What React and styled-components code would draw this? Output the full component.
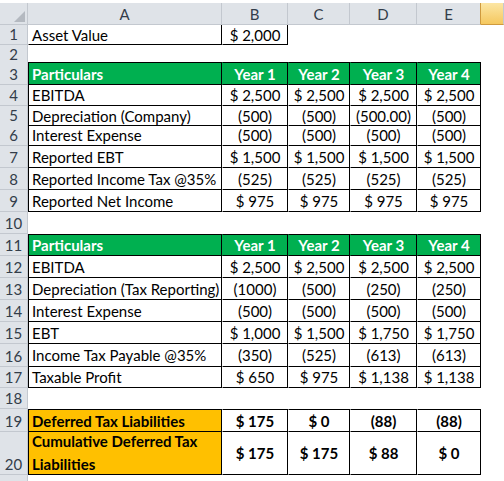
import React from "react";
import styled, { createGlobalStyle } from "styled-components";

const GREEN = "#00b050";
const GOLD = "#ffc000";
const GRID = "#c3c8cf";
const HEAD_BG = "#dfe3e8";
const COLS = "28px 194px 66px 62px 67px 64px 1fr";

const GlobalStyle = createGlobalStyle`
  html, body {
    margin: 0;
    padding: 0;
    background: #fff;
  }
  body {
    font-family: "Lato", "Liberation Sans", sans-serif;
  }
`;

const Sheet = styled.div`
  width: 504px;
  height: 481px;
  box-sizing: border-box;
  padding-top: 3px;
  overflow: hidden;
  display: flex;
  flex-direction: column;
  font-size: 15px;
  color: #000;
`;

const Row = styled.div`
  flex: none;
  display: grid;
  grid-template-columns: ${COLS};
  height: ${(p) => p.$h}px;
`;

const Corner = styled.div`
  background: ${HEAD_BG};
  border-right: 1px solid ${GRID};
  border-bottom: 1px solid ${GRID};
  display: flex;
  align-items: flex-end;
  justify-content: flex-end;
  padding: 0 2px 2px 0;
  box-sizing: border-box;
`;

const ColHead = styled.div`
  box-sizing: border-box;
  background: ${(p) =>
    p.$selected ? "linear-gradient(#fce6a4, #f5c85f)" : HEAD_BG};
  border-right: 1px solid ${(p) => (p.$edge ? "#cf9a3e" : GRID)};
  border-bottom: 1px solid ${(p) => (p.$selected ? "#cf9a3e" : GRID)};
  display: flex;
  align-items: center;
  justify-content: center;
  color: #333d4a;
  font-size: 15px;
`;

const RowNum = styled.div`
  box-sizing: border-box;
  background: ${HEAD_BG};
  border-right: 1px solid ${GRID};
  border-bottom: 1px solid ${GRID};
  display: flex;
  align-items: flex-end;
  justify-content: center;
  padding-bottom: 1px;
  line-height: 18px;
  color: #333d4a;
  font-size: 15px;
`;

const Cell = styled.div`
  box-sizing: border-box;
  min-width: 0;
  display: flex;
  align-items: center;
  justify-content: ${(p) => (p.$center ? "center" : "flex-start")};
  padding: 0 3px;
  white-space: ${(p) => (p.$wrap ? "normal" : "nowrap")};
  line-height: ${(p) => (p.$wrap ? "23px" : "18px")};
  overflow: hidden;
  background: ${(p) => p.$fill || "transparent"};
  color: ${(p) => (p.$fill === GREEN ? "#fff" : "#000")};
  font-weight: ${(p) => (p.$bold ? 700 : 400)};
  border-top: ${(p) => (p.$top ? "1px solid #000" : "0")};
  border-left: 1px solid ${(p) => (p.$edge ? "#000" : "transparent")};
  border-right: 1px solid ${(p) => (p.$box ? "#000" : "transparent")};
  border-bottom: 1px solid ${(p) => (p.$box ? "#000" : "transparent")};
`;

const Triangle = () => (
  <svg width="11" height="11" viewBox="0 0 11 11">
    <polygon points="11,0 11,11 0,11" fill="#b4b9c0" />
  </svg>
);

const TableRow = ({ n, h, label, values, head, gold, top, wrap }) => {
  const bold = head || gold;
  return (
    <Row $h={h}>
      <RowNum>{n}</RowNum>
      <Cell
        $box
        $edge
        $top={top}
        $bold={bold}
        $wrap={wrap}
        $fill={head ? GREEN : gold ? GOLD : undefined}
      >
        {label}
      </Cell>
      {values.map((v, i) => (
        <Cell
          key={i}
          $box
          $top={top}
          $center
          $bold={bold}
          $fill={head ? GREEN : undefined}
        >
          {v}
        </Cell>
      ))}
      <Cell />
    </Row>
  );
};

const BlankRow = ({ n, h }) => (
  <Row $h={h}>
    <RowNum>{n}</RowNum>
  </Row>
);

const years = ["Year 1", "Year 2", "Year 3", "Year 4"];
const same = (v) => [v, v, v, v];

export default function App() {
  return (
    <>
      <GlobalStyle />
      <Sheet>
        <Row $h={22}>
          <Corner>
            <Triangle />
          </Corner>
          <ColHead>A</ColHead>
          <ColHead>B</ColHead>
          <ColHead>C</ColHead>
          <ColHead>D</ColHead>
          <ColHead $edge>E</ColHead>
          <ColHead $selected />
        </Row>

        <Row $h={20}>
          <RowNum>1</RowNum>
          <Cell $box>Asset Value</Cell>
          <Cell $center $box>
            $ 2,000
          </Cell>
        </Row>
        <BlankRow n={2} h={17} />

        <TableRow n={3} h={23} top head label="Particulars" values={years} />
        <TableRow n={4} h={21} label="EBITDA" values={same("$ 2,500")} />
        <TableRow
          n={5}
          h={19}
          label="Depreciation (Company)"
          values={["(500)", "(500)", "(500.00)", "(500)"]}
        />
        <TableRow n={6} h={21} label="Interest Expense" values={same("(500)")} />
        <TableRow n={7} h={22} label="Reported EBT" values={same("$ 1,500")} />
        <TableRow
          n={8}
          h={22}
          label="Reported Income Tax @35%"
          values={same("(525)")}
        />
        <TableRow n={9} h={22} label="Reported Net Income" values={same("$ 975")} />
        <BlankRow n={10} h={22} />

        <TableRow n={11} h={22} top head label="Particulars" values={years} />
        <TableRow n={12} h={22} label="EBITDA" values={same("$ 2,500")} />
        <TableRow
          n={13}
          h={22}
          label="Depreciation (Tax Reporting)"
          values={["(1000)", "(500)", "(250)", "(250)"]}
        />
        <TableRow n={14} h={22} label="Interest Expense" values={same("(500)")} />
        <TableRow
          n={15}
          h={22}
          label="EBT"
          values={["$ 1,000", "$ 1,500", "$ 1,750", "$ 1,750"]}
        />
        <TableRow
          n={16}
          h={23}
          label="Income Tax Payable @35%"
          values={["(350)", "(525)", "(613)", "(613)"]}
        />
        <TableRow
          n={17}
          h={21}
          label="Taxable Profit"
          values={["$ 650", "$ 975", "$ 1,138", "$ 1,138"]}
        />
        <BlankRow n={18} h={21} />

        <TableRow
          n={19}
          h={23}
          top
          gold
          label="Deferred Tax Liabilities"
          values={["$ 175", "$ 0", "(88)", "(88)"]}
        />
        <TableRow
          n={20}
          h={43}
          gold
          wrap
          label="Cumulative Deferred Tax Liabilities"
          values={["$ 175", "$ 175", "$ 88", "$ 0"]}
        />
        <BlankRow h={21} />
      </Sheet>
    </>
  );
}
